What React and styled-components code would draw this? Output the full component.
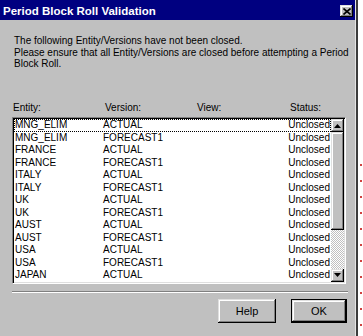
import styled, { createGlobalStyle } from 'styled-components';

const GlobalStyle = createGlobalStyle`
  html, body {
    margin: 0;
    padding: 0;
    background: #fff;
  }
  body {
    font-family: "Liberation Sans", Arial, sans-serif;
  }
`;

const rows = [
  ['MNG_ELIM', 'ACTUAL'],
  ['MNG_ELIM', 'FORECAST1'],
  ['FRANCE', 'ACTUAL'],
  ['FRANCE', 'FORECAST1'],
  ['ITALY', 'ACTUAL'],
  ['ITALY', 'FORECAST1'],
  ['UK', 'ACTUAL'],
  ['UK', 'FORECAST1'],
  ['AUST', 'ACTUAL'],
  ['AUST', 'FORECAST1'],
  ['USA', 'ACTUAL'],
  ['USA', 'FORECAST1'],
  ['JAPAN', 'ACTUAL'],
];

// classic raised 3d edge
const raised = `
  box-shadow: inset -1px -1px #000, inset 1px 1px #dfdfdf,
    inset -2px -2px #808080, inset 2px 2px #fff;
`;

const App = () => {
  return (
    <Screen>
      <GlobalStyle />
      <Dialog>
        <TitleBar>
          <TitleText>Period Block Roll Validation</TitleText>
          <CloseButton>
            <svg width='8' height='7' viewBox='0 0 8 7'>
              <path d='M0.5 0.5 L7.5 6.5 M7.5 0.5 L0.5 6.5' stroke='#000' strokeWidth='1.6' />
            </svg>
          </CloseButton>
        </TitleBar>
        <Message>
          <p>The following Entity/Versions have not been closed.</p>
          <p>Please ensure that all Entity/Versions are closed before attempting a Period Block Roll.</p>
        </Message>
        <Headers>
          <span>Entity:</span>
          <span>Version:</span>
          <span>View:</span>
          <span>Status:</span>
        </Headers>
        <ListBox>
          <Rows>
            {rows.map(([entity, version], i) => (
              <Row key={i} $focused={i === 0}>
                <span>{entity}</span>
                <span>{version}</span>
                <span>Unclosed</span>
              </Row>
            ))}
          </Rows>
          <ScrollBar>
            <ScrollButton>
              <svg width='7' height='4' viewBox='0 0 7 4'>
                <polygon points='3.5,0 7,4 0,4' fill='#000' />
              </svg>
            </ScrollButton>
            <Thumb />
            <Track />
            <ScrollButton>
              <svg width='7' height='4' viewBox='0 0 7 4'>
                <polygon points='0,0 7,0 3.5,4' fill='#000' />
              </svg>
            </ScrollButton>
          </ScrollBar>
        </ListBox>
        <Separator />
        <ButtonRow>
          <Button>Help</Button>
          <Button $default>OK</Button>
        </ButtonRow>
      </Dialog>
      <Edge />
      <Backdrop>
        <Specks />
      </Backdrop>
    </Screen>
  );
};

const Screen = styled.div`
  display: flex;
  width: 363px;
  height: 336px;
  overflow: hidden;
`;

const Dialog = styled.div`
  width: 355px;
  background: #c0c0c0;
  border-right: 1px solid #e4e4e4;
  display: flex;
  flex-direction: column;
  color: #000;
`;

const TitleBar = styled.div`
  height: 20px;
  background: #000080;
  display: flex;
  align-items: center;
  justify-content: space-between;
  padding: 0 2px 0 3px;
`;

const TitleText = styled.div`
  color: #fff;
  font-weight: bold;
  font-size: 11.5px;
  line-height: 20px;
  padding-top: 1px;
  white-space: nowrap;
`;

const CloseButton = styled.div`
  width: 13px;
  height: 12px;
  margin-top: 2px;
  background: #c0c0c0;
  display: flex;
  align-items: center;
  justify-content: center;
  ${raised}
`;

const Message = styled.div`
  padding: 15px 0 0 14px;
  width: 338px;
  font-size: 10px;
  line-height: 11.5px;
  p {
    margin: 0;
  }
`;

const Headers = styled.div`
  display: grid;
  grid-template-columns: 92px 92px 93px auto;
  margin-top: 32px;
  padding-left: 13px;
  font-size: 10px;
  line-height: 12px;
`;

const ListBox = styled.div`
  display: flex;
  margin: 3.5px 9px 0 12px;
  height: 166.5px;
  box-sizing: border-box;
  background: #fff;
  border: 1px solid;
  border-color: #808080 #fff #fff #808080;
  padding: 1px;
  box-shadow: inset 1px 1px #000, inset -1px -1px #dfdfdf;
`;

const Rows = styled.div`
  flex: 1;
  display: flex;
  flex-direction: column;
`;

const Row = styled.div`
  display: grid;
  grid-template-columns: 88px 1fr auto;
  height: 12.5px;
  line-height: 12.5px;
  padding: 0 1px;
  font-size: 10px;
  outline: ${(p) => (p.$focused ? '1px dotted #000' : 'none')};
  outline-offset: -1px;
`;

const ScrollBar = styled.div`
  width: 13px;
  display: flex;
  flex-direction: column;
`;

const ScrollButton = styled.div`
  height: 13px;
  background: #c0c0c0;
  display: flex;
  align-items: center;
  justify-content: center;
  ${raised}
`;

const Thumb = styled.div`
  height: 98px;
  background: #c0c0c0;
  ${raised}
`;

const Track = styled.div`
  flex: 1;
  background: repeating-conic-gradient(#c0c0c0 0 25%, #fff 0 50%) 0 0 / 2px 2px;
`;

const Separator = styled.div`
  margin: 7.5px 7px 0 12px;
  border-top: 1px solid #808080;
  border-bottom: 1px solid #fff;
`;

const ButtonRow = styled.div`
  display: flex;
  justify-content: flex-end;
  gap: 15px;
  margin-top: 6px;
  padding-right: 8px;
`;

const Button = styled.div`
  width: ${(p) => (p.$default ? '56px' : '58px')};
  height: 24px;
  box-sizing: border-box;
  display: flex;
  align-items: center;
  justify-content: center;
  font-size: 11px;
  background: #c0c0c0;
  border: ${(p) => (p.$default ? '1px solid #000' : 'none')};
  ${raised}
`;

const Edge = styled.div`
  width: 2px;
  background: #3c3c3c;
`;

const Backdrop = styled.div`
  flex: 1;
  background: #fff;
  display: flex;
  flex-direction: column;
  align-items: center;
`;

const Specks = styled.div`
  width: 2px;
  margin-top: 150px;
  flex: 1;
  background: repeating-linear-gradient(
    to bottom,
    transparent 0 14px,
    #d04040 14px 16px
  );
`;

export default App;
